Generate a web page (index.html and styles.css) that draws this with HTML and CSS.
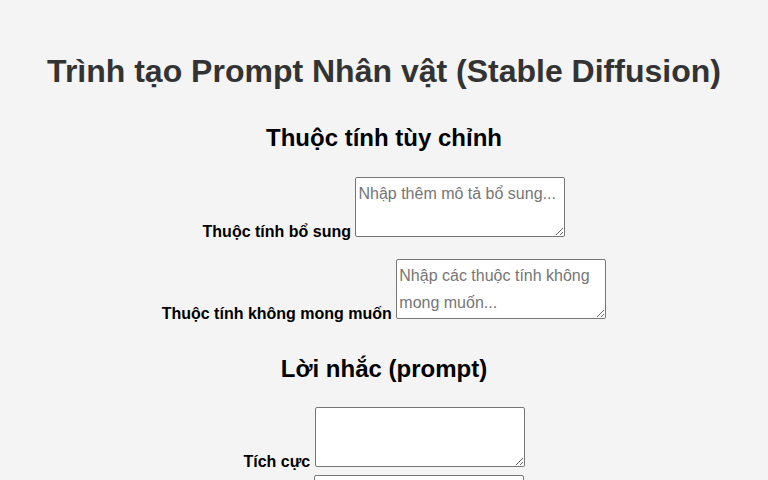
FILE: index.html
```html
<!DOCTYPE html>
<html lang="vi">
<head>
<meta charset="utf-8">
<title>Trình tạo Prompt Nhân vật</title>
<link rel="stylesheet" href="styles.css">
</head>
<body>
<h1 class="title">Trình tạo Prompt Nhân vật (Stable Diffusion)</h1>

<section class="section custom">
  <h2 class="section-title">Thuộc tính tùy chỉnh</h2>
  <div class="row spaced">
    <label class="field-label" for="extra">Thuộc tính bổ sung</label>
    <textarea id="extra" class="field" placeholder="Nhập thêm mô tả bổ sung..."></textarea>
  </div>
  <div class="row spaced">
    <label class="field-label" for="unwanted">Thuộc tính không mong muốn</label>
    <textarea id="unwanted" class="field" placeholder="Nhập các thuộc tính không mong muốn..."></textarea>
  </div>
</section>

<section class="section prompt">
  <h2 class="section-title">Lời nhắc (prompt)</h2>
  <div class="row">
    <label class="field-label" for="positive">Tích cực</label>
    <textarea id="positive" class="field"></textarea>
  </div>
  <div class="row">
    <label class="field-label" for="negative">Tiêu cực</label>
    <textarea id="negative" class="field"></textarea>
  </div>
</section>
</body>
</html>
```

FILE: styles.css
```css
html, body {
  margin: 0;
  padding: 0;
}

body {
  background: #f4f4f4;
  color: #000;
  font-family: "Liberation Sans", Arial, sans-serif;
  font-size: 16px;
  line-height: 1.6;
  text-align: center;
}

.title {
  margin: 53px 0 0;
  font-family: "Liberation Sans", Arial, sans-serif;
  font-weight: bold;
  font-size: 32px;
  line-height: 36px;
  color: #333;
}

.section-title {
  margin: 0 0 25px;
  font-size: 24px;
  line-height: 28px;
  font-weight: bold;
}

.prompt .section-title {
  margin-bottom: 24px;
}

.custom {
  margin-top: 35px;
}

.prompt {
  margin-top: 29px;
}

.row.spaced {
  margin-bottom: 14px;
}

.row.spaced:last-child {
  margin-bottom: 0;
}

.field-label {
  font-weight: bold;
}

.field {
  box-sizing: border-box;
  width: 210px;
  height: 60px;
  padding: 2px;
  font-family: "Liberation Sans", Arial, sans-serif;
  font-size: 16px;
  line-height: 27px;
  background: #fff;
  border: 1px solid #767676;
  border-radius: 2px;
  vertical-align: baseline;
}

.field::placeholder {
  color: #757575;
}
```
